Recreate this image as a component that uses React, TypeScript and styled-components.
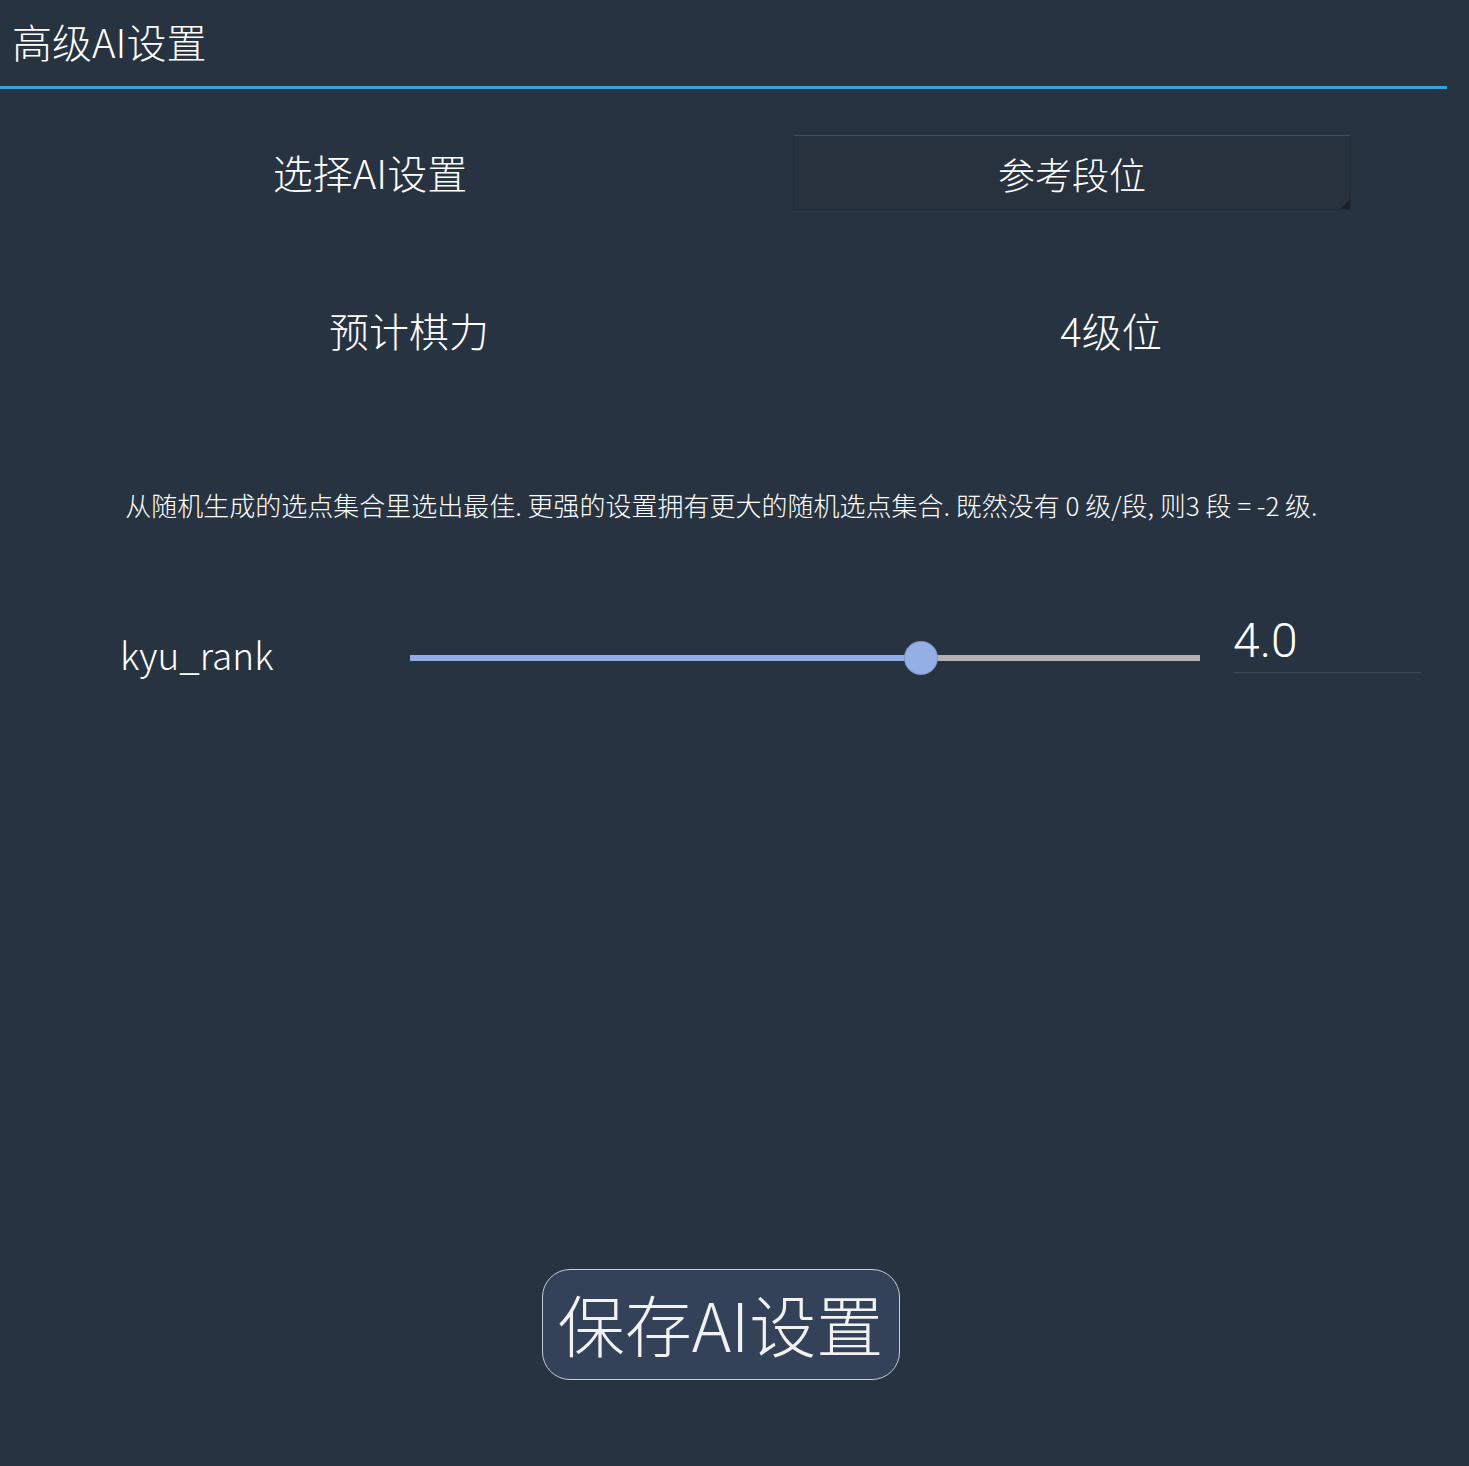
import styled, { createGlobalStyle } from 'styled-components';

/** style */
const GlobalStyle = createGlobalStyle`
  html, body {
    margin: 0;
    padding: 0;
    background: #283341;
  }
  body {
    font-family: 'Noto Sans CJK SC', 'Noto Sans', sans-serif;
    font-weight: 300;
    color: #ffffff;
  }
`;

const Page = styled.div`
  width: 1469px;
  height: 1466px;
  display: flex;
  flex-direction: column;
  background: #283341;
`;

const TitleBar = styled.div`
  width: 1435px;
  height: 82px;
  padding: 0 0 4px 12px;
  display: flex;
  align-items: center;
  font-size: 40px;
  border-bottom: 3px solid #34a4d6;
`;

const Row = styled.div<{ $height: number; $padLeft: number }>`
  height: ${(p) => p.$height}px;
  padding-left: ${(p) => p.$padLeft}px;
  display: grid;
  grid-template-columns: 702px 702px;
  align-items: center;
`;

const Cell = styled.div<{ $size?: number }>`
  display: flex;
  justify-content: center;
  align-items: center;
  font-size: ${(p) => p.$size ?? 40}px;
`;

const Dropdown = styled.button`
  position: relative;
  width: 558px;
  height: 75px;
  box-sizing: border-box;
  background: #28323f;
  border: 1px solid #222b36;
  border-top: 1px solid #3f4f69;
  color: #ffffff;
  font-family: inherit;
  font-weight: inherit;
  font-size: 37px;
  padding: 4px 0 0;

  &::after {
    content: '';
    position: absolute;
    right: 0;
    bottom: 0;
    border-style: solid;
    border-width: 0 0 10px 10px;
    border-color: transparent transparent #1b222c transparent;
  }
`;

const Description = styled.div`
  height: 194px;
  width: 1443px;
  display: flex;
  justify-content: center;
  align-items: center;
  font-size: 26px;
  padding-top: 4px;
  box-sizing: border-box;
`;

const SliderRow = styled.div`
  height: 108px;
  margin-top: 5px;
  display: flex;
  align-items: center;
`;

const SliderLabel = styled.div`
  width: 290px;
  padding-left: 120px;
  font-size: 37px;
  padding-bottom: 8px;
`;

const Track = styled.div`
  position: relative;
  width: 790px;
  height: 6px;
  background: #b2b2b2;
`;

const TrackFill = styled.div`
  height: 100%;
  background: #92ade5;
`;

const Knob = styled.div`
  position: absolute;
  top: 50%;
  width: 32px;
  height: 32px;
  margin-left: -16px;
  margin-top: -16px;
  border-radius: 50%;
  background: #94afe6;
  box-shadow: 0 0 0 1px #7f97c6;
`;

const ValueField = styled.div`
  margin-left: 33px;
  width: 188px;
  height: 58px;
  margin-top: -28px;
  box-sizing: border-box;
  border-bottom: 1px solid #3e4858;
  font-family: Roboto, 'Noto Sans', sans-serif;
  font-weight: 300;
  font-size: 48px;
  line-height: 52px;
  color: #ffffff;
`;

const Spacer = styled.div`
  flex: 1;
`;

const Footer = styled.div`
  width: 1441px;
  height: 197px;
  display: flex;
  justify-content: center;
`;

const SaveButton = styled.button`
  width: 358px;
  height: 111px;
  box-sizing: border-box;
  border-radius: 28px;
  border: 1.5px solid #c6ced8;
  background: #334259;
  color: #f2f2f2;
  font-family: inherit;
  font-weight: inherit;
  font-size: 67px;
  padding: 0 0 4px;
`;

/**
 * component
 * 高级AI设置
 */
const App: React.FC = () => {
  const min = -3;
  const max = 9;
  const value = 4.0;
  const ratio = (value - min) / (max - min) + 0.064;

  return (
    <>
      <GlobalStyle />
      <Page>
        <TitleBar>高级AI设置</TitleBar>
        <Row $height={166} $padLeft={19}>
          <Cell>选择AI设置</Cell>
          <Cell>
            <Dropdown>参考段位</Dropdown>
          </Cell>
        </Row>
        <Row $height={150} $padLeft={58}>
          <Cell>预计棋力</Cell>
          <Cell>4级位</Cell>
        </Row>
        <Description>
          从随机生成的选点集合里选出最佳. 更强的设置拥有更大的随机选点集合. 既然没有 0 级/段, 则3 段 = -2 级.
        </Description>
        <SliderRow>
          <SliderLabel>kyu_rank</SliderLabel>
          <Track>
            <TrackFill style={{ width: `${ratio * 100}%` }} />
            <Knob style={{ left: `${ratio * 100}%` }} />
          </Track>
          <ValueField>{value.toFixed(1)}</ValueField>
        </SliderRow>
        <Spacer />
        <Footer>
          <SaveButton>保存AI设置</SaveButton>
        </Footer>
      </Page>
    </>
  );
};

export default App;
